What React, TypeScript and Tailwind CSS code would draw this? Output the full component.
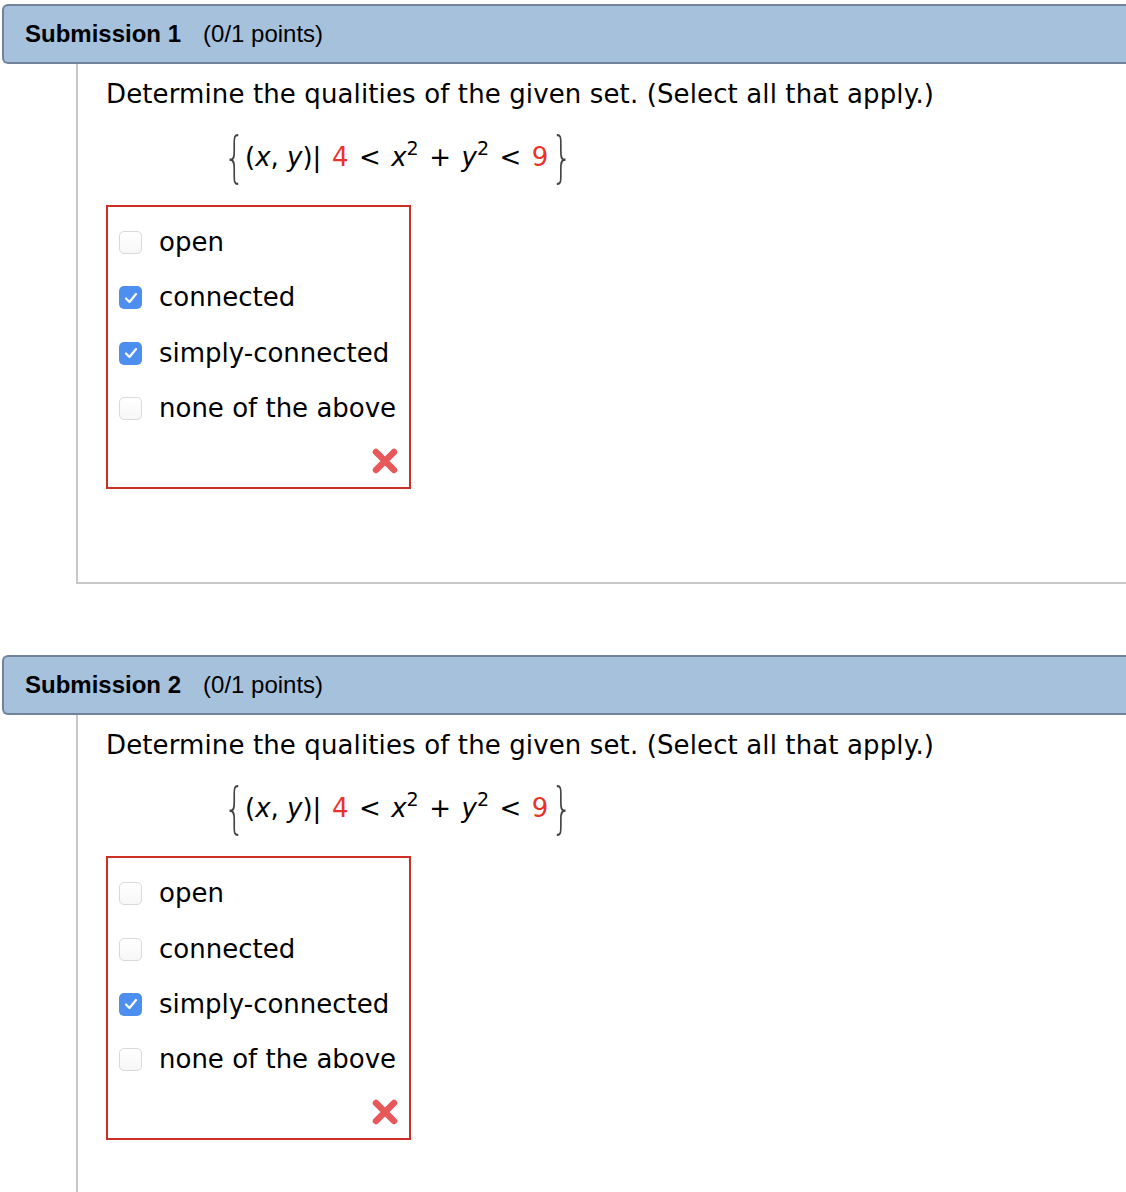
import React from 'react';

type Choice = {label: string; checked: boolean};

const submissions: {n: number; choices: Choice[]}[] = [
  {
    n: 1,
    choices: [
      {label: 'open', checked: false},
      {label: 'connected', checked: true},
      {label: 'simply-connected', checked: true},
      {label: 'none of the above', checked: false}
    ]
  },
  {
    n: 2,
    choices: [
      {label: 'open', checked: false},
      {label: 'connected', checked: false},
      {label: 'simply-connected', checked: true},
      {label: 'none of the above', checked: false}
    ]
  }
];

const bodyFont = {fontFamily: '"DejaVu Sans", Verdana, sans-serif'};

function Checkbox({checked}: {checked: boolean}) {
  if (checked) {
    return (
      <span className="flex h-[23px] w-[23px] shrink-0 items-center justify-center rounded-[5px] bg-[#4d8ff0]">
        <svg width="14" height="12" viewBox="0 0 14 12" fill="none">
          <path d="M2 6.5 L5.5 10 L12 2" stroke="white" strokeWidth="2.2" strokeLinecap="round" strokeLinejoin="round" />
        </svg>
      </span>
    );
  }
  return (
    <span className="h-[23px] w-[23px] shrink-0 rounded-[5px] border border-[#d9d9d9] bg-gradient-to-b from-white to-[#f7f7f7]" />
  );
}

function WrongMark() {
  return (
    <svg width="28" height="28" viewBox="0 0 28 28" className="blur-[0.6px]">
      <path d="M5 5 L23 23 M23 5 L5 23" stroke="#e6585a" strokeWidth="6.5" strokeLinecap="round" />
    </svg>
  );
}

function Sq() {
  return <span className="relative -top-[11px] text-[19px]">2</span>;
}

function Formula() {
  return (
    <div className="ml-[118px] mt-[19px] flex h-[56px] items-center text-[26px] text-black" style={bodyFont}>
      <span className="origin-center scale-y-[1.65] text-[33px] font-extralight leading-none text-[#444]">{'{'}</span>
      <div className="flex items-center gap-[10.5px]">
        <span>(<i>x</i>, <i>y</i>)|</span>
        <span className="text-[#e8332b]">4</span>
        <span>&lt;</span>
        <span><i>x</i><Sq /></span>
        <span>+</span>
        <span><i>y</i><Sq /></span>
        <span>&lt;</span>
        <span className="text-[#e8332b]">9</span>
      </div>
      <span className="ml-[3px] origin-center scale-y-[1.65] text-[33px] font-extralight leading-none text-[#444]">{'}'}</span>
    </div>
  );
}

function Submission({n, choices, last}: {n: number; choices: Choice[]; last: boolean}) {
  return (
    <section>
      <div
        className="flex h-[60px] items-center rounded-l-[6px] border-2 border-r-0 border-[#70839a] bg-[#a6c1dc] pl-[21px] text-[24px] text-black"
        style={{fontFamily: '"Liberation Sans", Arial, sans-serif'}}
      >
        <span className="font-bold">Submission {n}</span>
        <span className="ml-[22px]">(0/1 points)</span>
      </div>
      <div className={`ml-[74px] border-l-2 border-[#c8c8c8] pl-[28px] pt-[14px] ${last ? 'pb-[60px]' : 'border-b-2 pb-[93px]'}`}>
        <p className="text-[26px] leading-[32px] tracking-[0.12px] text-black" style={bodyFont}>
          Determine the qualities of the given set. (Select all that apply.)
        </p>
        <Formula />
        <div className="mt-[20px] w-[305px] border-2 border-[#cc2f25] pb-[12px] pl-[11px] pr-[10px] pt-[8px]" style={bodyFont}>
          <div className="flex flex-col">
            {choices.map((c) => (
              <label key={c.label} className="flex h-[55.3px] items-center gap-[17px] text-[26px] text-black">
                <Checkbox checked={c.checked} />
                <span>{c.label}</span>
              </label>
            ))}
          </div>
          <div className="mt-[11px] flex justify-end">
            <WrongMark />
          </div>
        </div>
      </div>
    </section>
  );
}

export default function App() {
  return (
    <div className="min-h-[1192px] overflow-hidden bg-white pl-[2px] pt-[4px]">
      {submissions.map((s, i) => (
        <div key={s.n} className={i > 0 ? 'mt-[71px]' : ''}>
          <Submission n={s.n} choices={s.choices} last={i === submissions.length - 1} />
        </div>
      ))}
    </div>
  );
}
